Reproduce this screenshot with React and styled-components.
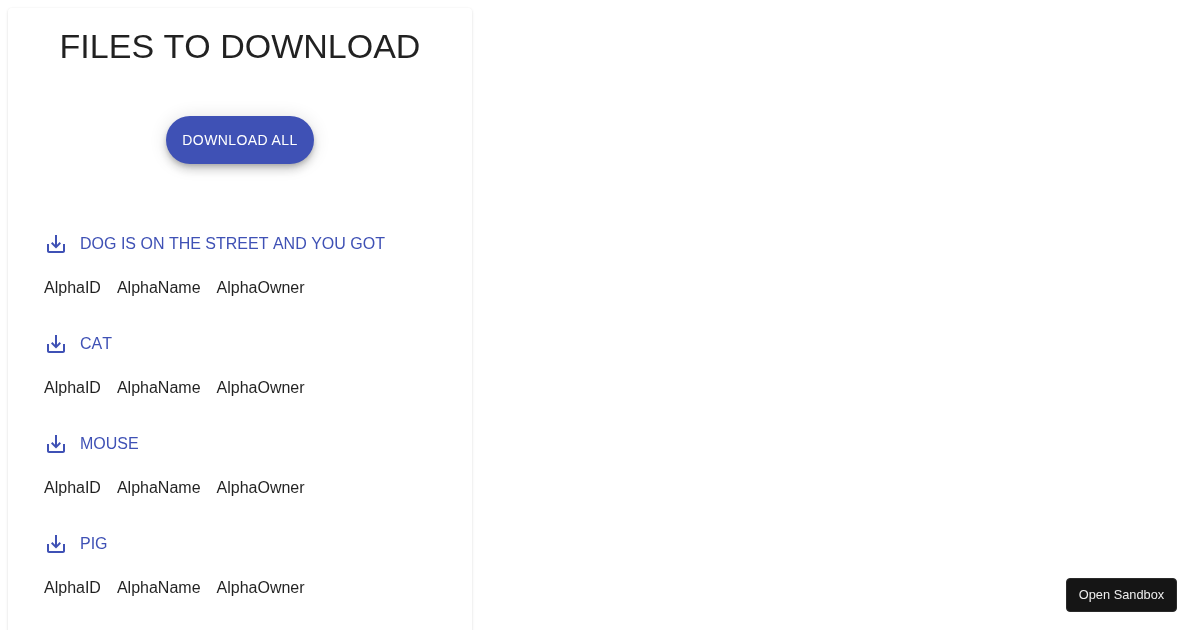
import React from "react";
import styled, { createGlobalStyle } from "styled-components";

const Global = createGlobalStyle`
  html, body { margin: 0; padding: 0; height: 630px; overflow: hidden; background: #fff; }
  body {
    font-family: "Liberation Sans", Arial, sans-serif;
    color: rgba(0,0,0,0.87);
    font-kerning: none;
  }
`;

const Page = styled.main`
  padding: 8px;
  width: 480px;
  box-sizing: border-box;
  will-change: transform;
`;

const Card = styled.section`
  border-radius: 4px;
  box-shadow: 0 1px 3px rgba(0,0,0,.12), 0 0 2px rgba(0,0,0,.05);
  padding: 16px 36px 40px;
  display: flex;
  flex-direction: column;
`;

const Title = styled.h1`
  margin: 0;
  font-size: 34px;
  font-weight: 400;
  line-height: 44px;
  text-align: center;
  white-space: nowrap;
  color: rgba(0,0,0,0.87);
`;

const Actions = styled.div`
  display: flex;
  justify-content: center;
  margin-top: 48px;
  margin-bottom: 58px;
`;

const DownloadAll = styled.button`
  height: 48px;
  width: 148px;
  padding: 0;
  border: 0;
  border-radius: 24px;
  background: #3f51b5;
  color: #fff;
  font: 400 14px "Liberation Sans", Arial, sans-serif;
  letter-spacing: 0.4px;
  box-shadow: 0 3px 5px -1px rgba(0,0,0,.2), 0 6px 10px 0 rgba(0,0,0,.14), 0 1px 18px 0 rgba(0,0,0,.12);
`;

const List = styled.div`
  display: flex;
  flex-direction: column;
`;

const Item = styled.article`
  height: 100px;
  display: flex;
  flex-direction: column;
`;

const FileLink = styled.a`
  display: flex;
  align-items: center;
  gap: 12px;
  height: 44px;
  color: #3f51b5;
  font-size: 16px;
  text-transform: uppercase;
`;

const Icon = styled.svg`
  width: 24px;
  height: 24px;
  fill: #3f51b5;
  flex: none;
`;

const Meta = styled.div`
  display: flex;
  gap: 16px;
  height: 44px;
  align-items: center;
  font-size: 16px;
  color: rgba(0,0,0,0.87);
`;

const SandboxButton = styled.a`
  position: fixed;
  right: 23px;
  bottom: 18px;
  width: 111px;
  height: 34px;
  padding-bottom: 1px;
  display: flex;
  align-items: center;
  justify-content: center;
  background: #151515;
  border: 1px solid #2a2a2a;
  box-sizing: border-box;
  border-radius: 4px;
  color: #eee;
  font-family: "Liberation Sans", sans-serif;
  font-size: 12.8px;
  will-change: transform;
`;

const files = ["Dog is on the street and you got", "Cat", "Mouse", "Pig"];

export default function App() {
  return (
    <>
      <Global />
      <Page>
        <Card>
          <Title>FILES TO DOWNLOAD</Title>
          <Actions>
            <DownloadAll>DOWNLOAD ALL</DownloadAll>
          </Actions>
          <List>
            {files.map((f) => (
              <Item key={f}>
                <FileLink>
                  <Icon viewBox="0 0 24 24">
                    <path d="M19 12v7H5v-7H3v7c0 1.1.9 2 2 2h14c1.1 0 2-.9 2-2v-7h-2zm-6 .67l2.59-2.58L17 11.5l-5 5-5-5 1.41-1.41L11 12.67V3h2z" />
                  </Icon>
                  {f}
                </FileLink>
                <Meta>
                  <span>AlphaID</span>
                  <span>AlphaName</span>
                  <span>AlphaOwner</span>
                </Meta>
              </Item>
            ))}
          </List>
        </Card>
      </Page>
      <SandboxButton>Open Sandbox</SandboxButton>
    </>
  );
}
